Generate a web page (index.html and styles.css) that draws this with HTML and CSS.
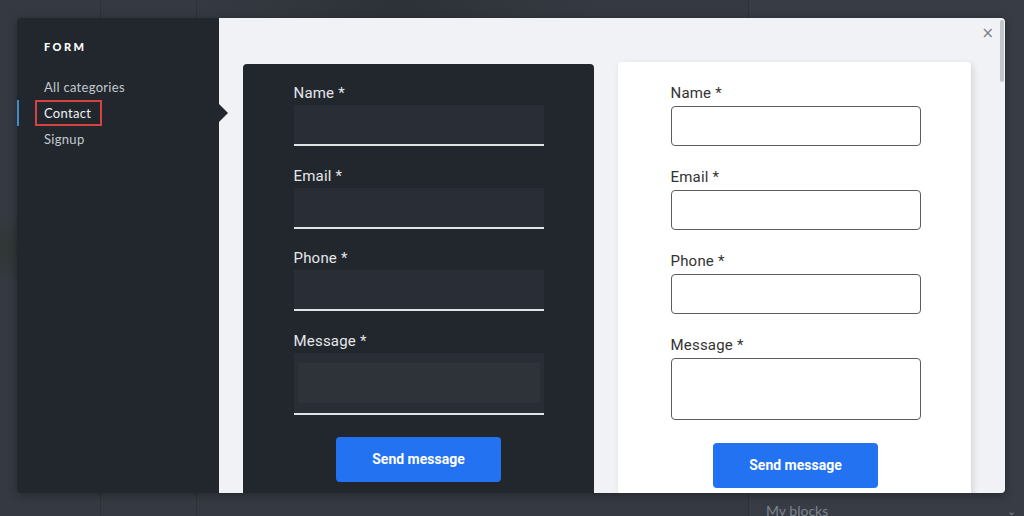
FILE: index.html
```html
<!DOCTYPE html>
<html lang="en">

<head>
    <meta charset="UTF-8">
    <title>Blocks - Form</title>
    <link rel="stylesheet" href="styles.css">
</head>

<body>
    <!-- editor underneath the modal -->
    <div class="editor">
        <div class="pane pane-a"></div>
        <div class="pane pane-b"></div>
        <div class="canvas"></div>
        <div class="side">
            <div class="side-title">My blocks <span class="side-caret">&#8964;</span></div>
        </div>
    </div>

    <!-- block picker modal -->
    <div class="modal">
        <aside class="cats">
            <h3 class="cats-title">FORM</h3>
            <ul class="cats-list">
                <li>All categories</li>
                <li class="on"><span class="mark">Contact</span></li>
                <li>Signup</li>
            </ul>
        </aside>

        <main class="blocks">
            <span class="close">&times;</span>
            <div class="scroll"></div>

            <div class="block dark">
                <form class="frm">
                    <div class="fld">
                        <label>Name *</label>
                        <div class="inp"></div>
                    </div>
                    <div class="fld">
                        <label>Email *</label>
                        <div class="inp"></div>
                    </div>
                    <div class="fld">
                        <label>Phone *</label>
                        <div class="inp"></div>
                    </div>
                    <div class="fld">
                        <label>Message *</label>
                        <div class="inp area"><div class="area-in"></div></div>
                    </div>
                    <div class="btn">Send message</div>
                </form>
            </div>

            <div class="block light">
                <form class="frm">
                    <div class="fld">
                        <label>Name *</label>
                        <div class="inp"></div>
                    </div>
                    <div class="fld">
                        <label>Email *</label>
                        <div class="inp"></div>
                    </div>
                    <div class="fld">
                        <label>Phone *</label>
                        <div class="inp"></div>
                    </div>
                    <div class="fld">
                        <label>Message *</label>
                        <div class="inp area"></div>
                    </div>
                    <div class="btn">Send message</div>
                </form>
            </div>
        </main>
    </div>
</body>

</html>
```

FILE: styles.css
```css
/* 기본 */
html,
body {
    margin: 0;
    height: 100%;
    overflow: hidden;
}

body {
    background: #353a42;
    font-family: Roboto, "Liberation Sans", sans-serif;
    position: relative;
}

/* 에디터 (모달 아래) */
.editor {
    display: flex;
    height: 100%;
    background:
        radial-gradient(ellipse at 40px 250px, #2f3432 0, rgba(47, 52, 50, 0) 120px),
        radial-gradient(ellipse at 400px 0, #2d3238 0, rgba(45, 50, 56, 0) 200px);
}

.pane-a {
    width: 100px;
    border-right: 1px solid #2c3037;
}

.pane-b {
    width: 95px;
    border-right: 1px solid #2c3037;
}

.canvas {
    width: 551px;
    border-right: 1px solid #2e3238;
}

.side {
    flex: 1;
    background: #373c45;
    position: relative;
}

.side-title {
    position: absolute;
    left: 17px;
    top: 502px;
    color: #7d838c;
    font: 14px Lato, sans-serif;
    width: 250px;
}

.side-caret {
    position: absolute;
    right: 0;
    top: 2px;
    font-size: 11px;
}

/* 모달 */
.modal {
    position: absolute;
    left: 17px;
    top: 18px;
    width: 988px;
    height: 475px;
    display: flex;
    border-radius: 4px;
    overflow: hidden;
    box-shadow: 0 2px 10px rgba(0, 0, 0, .35);
}

/* 카테고리 */
.cats {
    width: 202px;
    background: #22272e;
    padding-top: 22px;
    font-family: Lato, "Open Sans", sans-serif;
    position: relative;
    z-index: 1;
}

.cats-title {
    margin: 0 0 20px 27px;
    font-size: 11px;
    line-height: 14px;
    letter-spacing: 2.4px;
    color: #fff;
    font-weight: 900;
}

.cats-list {
    list-style: none;
    margin: 0;
    padding: 0;
}

.cats-list li {
    height: 26px;
    line-height: 26px;
    padding-left: 27px;
    font-size: 13px;
    letter-spacing: .3px;
    color: #c3c8cf;
    position: relative;
}

.cats-list li.on {
    color: #eef0f3;
    box-shadow: inset 2px 0 0 #3f8bc9;
}

/* 오른쪽을 가리키는 화살표 */
.cats-list li.on::after {
    content: "";
    position: absolute;
    left: 100%;
    top: 4px;
    border-left: 9px solid #22272e;
    border-top: 9px solid transparent;
    border-bottom: 9px solid transparent;
}

/* 빨간 표시 박스 */
.mark {
    display: inline-block;
    border: 2px solid #d4433e;
    margin-left: -9px;
    padding: 0 9px 0 7px;
    line-height: 22px;
    vertical-align: top;
}

/* 블록 목록 */
.blocks {
    flex: 1;
    background: #f1f2f6;
    display: flex;
    align-items: flex-start;
    gap: 24px;
    padding: 44px 0 0 24px;
    position: relative;
}

.close {
    position: absolute;
    right: 11px;
    top: 6px;
    font-size: 15px;
    color: #7b818a;
    font-family: "DejaVu Sans", sans-serif;
}

.scroll {
    position: absolute;
    right: 1px;
    top: 2px;
    width: 4px;
    height: 62px;
    border-radius: 2px;
    background: #c2c5ca;
}

.block {
    border-radius: 4px;
    height: 460px;
}

.block.dark {
    width: 351px;
    margin-top: 2px;
    background: #22272e;
    padding-top: 20px;
}

.block.light {
    width: 351px;
    background: #fff;
    padding: 22px 0 0 2px;
    box-shadow: 2px 2px 6px rgba(0, 0, 0, .12);
}

/* 폼 */
.frm {
    width: 250px;
    margin: 0 auto;
}

.fld label {
    display: block;
    font-size: 15px;
    line-height: 18px;
    letter-spacing: .2px;
}

.dark .fld {
    margin-bottom: 20.7px;
}

.dark .fld label {
    color: #e4e6e9;
    margin-bottom: 3px;
}

.dark .inp {
    height: 39px;
    background: #292e36;
    border-bottom: 2px solid #e2e3e5;
}

.dark .inp.area {
    height: 40px;
    padding: 10px 4px;
}

.area-in {
    height: 40px;
    background: #2e333a;
}

.light .fld {
    margin-bottom: 22px;
}

.light .fld label {
    color: #333;
    margin-bottom: 4px;
}

.light .inp {
    height: 38px;
    border: 1px solid #5c5c5c;
    border-radius: 4px;
}

.light .inp.area {
    height: 60px;
}

/* 버튼 */
.btn {
    width: 165px;
    height: 45px;
    margin: 0 auto;
    border-radius: 4px;
    background: #2372f1;
    color: #fff;
    font-size: 14px;
    font-weight: bold;
    line-height: 45px;
    text-align: center;
}

.dark .btn {
    margin-top: 22px;
}

.dark .fld:last-of-type {
    margin-bottom: 0;
}

.light .fld:last-of-type {
    margin-bottom: 0;
}

.light .btn {
    margin-top: 23px;
}
```
